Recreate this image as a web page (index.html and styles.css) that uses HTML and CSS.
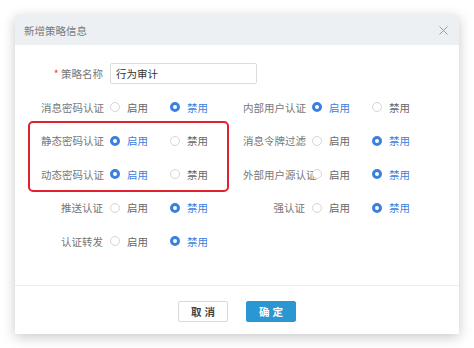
FILE: index.html
```html
<!DOCTYPE html>
<html lang="zh-CN">
<head>
    <meta charset="UTF-8">
    <title>新增策略信息</title>
    <link rel="stylesheet" href="styles.css">
</head>
<body>
    <div class="dialog">
        <div class="dialog-head">
            <span class="dialog-title">新增策略信息</span>
            <svg class="close" width="9" height="9" viewBox="0 0 9 9">
                <path d="M0.5 0.5 L8.5 8.5 M8.5 0.5 L0.5 8.5" stroke="#9a9a9a" stroke-width="1"/>
            </svg>
        </div>

        <div class="dialog-body">
            <!-- highlight box over the static / dynamic rows -->
            <div class="highlight"></div>

            <div class="row">
                <label class="field-label"><span class="req">*</span> 策略名称</label>
                <input class="text-input" type="text" value="行为审计">
            </div>

            <div class="grid">
                <div class="row">
                    <label class="field-label">消息密码认证</label>
                    <span class="opt"><i class="radio"></i>启用</span>
                    <span class="opt on"><i class="radio"></i>禁用</span>
                </div>
                <div class="row">
                    <label class="field-label">内部用户认证</label>
                    <span class="opt on"><i class="radio"></i>启用</span>
                    <span class="opt"><i class="radio"></i>禁用</span>
                </div>

                <div class="row">
                    <label class="field-label">静态密码认证</label>
                    <span class="opt on"><i class="radio"></i>启用</span>
                    <span class="opt"><i class="radio"></i>禁用</span>
                </div>
                <div class="row">
                    <label class="field-label">消息令牌过滤</label>
                    <span class="opt"><i class="radio"></i>启用</span>
                    <span class="opt on"><i class="radio"></i>禁用</span>
                </div>

                <div class="row">
                    <label class="field-label">动态密码认证</label>
                    <span class="opt on"><i class="radio"></i>启用</span>
                    <span class="opt"><i class="radio"></i>禁用</span>
                </div>
                <div class="row">
                    <label class="field-label">外部用户源认证</label>
                    <span class="opt"><i class="radio"></i>启用</span>
                    <span class="opt on"><i class="radio"></i>禁用</span>
                </div>

                <div class="row">
                    <label class="field-label">推送认证</label>
                    <span class="opt"><i class="radio"></i>启用</span>
                    <span class="opt on"><i class="radio"></i>禁用</span>
                </div>
                <div class="row">
                    <label class="field-label">强认证</label>
                    <span class="opt"><i class="radio"></i>启用</span>
                    <span class="opt on"><i class="radio"></i>禁用</span>
                </div>

                <div class="row">
                    <label class="field-label">认证转发</label>
                    <span class="opt"><i class="radio"></i>启用</span>
                    <span class="opt on"><i class="radio"></i>禁用</span>
                </div>
            </div>
        </div>

        <div class="dialog-foot">
            <button class="btn btn-cancel">取消</button>
            <button class="btn btn-ok">确定</button>
        </div>
    </div>
</body>
</html>
```

FILE: styles.css
```css
/* page */
body {
    margin: 0;
    background: #fff;
    font-family: "Noto Sans CJK SC", "Noto Sans", sans-serif;
    font-size: 10.5px;
    color: #666;
}

/* dialog shell */
.dialog {
    width: 444px;
    margin: 15px;
    background: #fff;
    box-shadow: 0 3px 12px rgba(0, 0, 0, 0.22);
}
.dialog-head {
    height: 30px;
    padding: 0 11px 0 9px;
    background: #edf0f3;
    display: flex;
    align-items: center;
    justify-content: space-between;
}
.dialog-title {
    color: #7a7a7a;
}
.close {
    display: block;
}

/* body */
.dialog-body {
    position: relative;
    padding: 18px 0 33px 26px;
    display: flex;
    flex-direction: column;
    gap: 12.5px;
}
.grid {
    display: grid;
    grid-template-columns: 202px 202px;
    row-gap: 12.5px;
}
.row {
    height: 21px;
    display: flex;
    align-items: center;
}
.field-label {
    width: 62px;
    flex-shrink: 0;
    margin-right: 7px;
    text-align: right;
    white-space: nowrap;
    color: #777;
}
.req {
    color: #e5484d;
}
.text-input {
    box-sizing: border-box;
    width: 147px;
    height: 21px;
    padding: 0 5px;
    border: 1px solid #dcdcdc;
    border-radius: 2px;
    font-family: inherit;
    font-size: 10.5px;
    color: #333;
    outline: none;
}

/* radios */
.opt {
    display: flex;
    align-items: center;
    width: 60px;
    color: #666;
}
.radio {
    box-sizing: border-box;
    width: 10px;
    height: 10px;
    margin-right: 7px;
    border: 1px solid #d6d6d6;
    border-radius: 50%;
    background: #fff;
}
.opt.on {
    color: #3b80de;
}
.opt.on .radio {
    border: 3px solid #3b80de;
    background: #fff;
}

/* red annotation box */
.highlight {
    position: absolute;
    left: 13px;
    top: 76px;
    width: 201px;
    height: 71px;
    box-sizing: border-box;
    border: 2px solid #e0212f;
    border-radius: 5px;
}

/* footer */
.dialog-foot {
    border-top: 1px solid #ececec;
    padding: 15px 0 12px;
    display: flex;
    justify-content: center;
    gap: 18px;
}
.btn {
    width: 50px;
    height: 21px;
    border-radius: 2px;
    font-family: inherit;
    font-size: 10.5px;
    font-weight: bold;
    letter-spacing: 3px;
    text-indent: 3px;
    cursor: pointer;
}
.btn-cancel {
    background: #fff;
    border: 1px solid #d9d9d9;
    color: #444;
}
.btn-ok {
    background: #2a97d2;
    border: 1px solid #2a97d2;
    color: #fff;
}
```
